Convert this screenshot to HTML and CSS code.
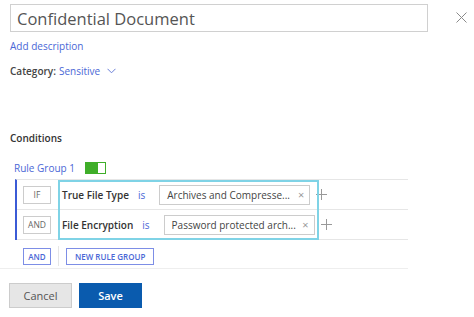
FILE: index.html
```html
<!DOCTYPE html>
<html lang="en">
<head>
  <meta charset="UTF-8" />
  <title>Rule Editor</title>
  <link rel="stylesheet" href="styles.css">
</head>
<body>
  <div class="page">

    <!-- Title -->
    <div class="title-row">
      <input class="title-input" type="text" value="Confidential Document" />
      <span class="close">
        <svg width="11" height="11" viewBox="0 0 11 11"><path d="M0.5 0.5L10.5 10.5M10.5 0.5L0.5 10.5" stroke="#8a8a8a" stroke-width="1"/></svg>
      </span>
    </div>
    <a class="link add-desc">Add description</a>
    <div class="category">
      <b>Category:</b> <a class="link">Sensitive</a>
      <svg class="chev" width="9" height="6" viewBox="0 0 9 6"><path d="M0.5 0.8L4.5 4.8L8.5 0.8" fill="none" stroke="#6a7fd8" stroke-width="1"/></svg>
    </div>

    <!-- Conditions -->
    <h3 class="section">Conditions</h3>
    <div class="group-head">
      <span class="link">Rule Group 1</span>
      <span class="toggle"><span class="knob"></span></span>
    </div>

    <div class="group">
      <div class="row">
        <span class="op">IF</span>
        <span class="field">True File Type</span>
        <span class="is">is</span>
        <span class="value">Archives and Compresse... <i class="x">&times;</i></span>
        <svg class="plus" width="11" height="11" viewBox="0 0 11 11"><path d="M5.5 0V11M0 5.5H11" stroke="#999" stroke-width="1"/></svg>
      </div>
      <div class="row">
        <span class="op">AND</span>
        <span class="field">File Encryption</span>
        <span class="is">is</span>
        <span class="value">Password protected arch... <i class="x">&times;</i></span>
        <svg class="plus" width="11" height="11" viewBox="0 0 11 11"><path d="M5.5 0V11M0 5.5H11" stroke="#999" stroke-width="1"/></svg>
      </div>
      <div class="highlight"></div>
    </div>

    <div class="group-actions">
      <button class="outline-btn and-btn">AND</button>
      <span class="divider"></span>
      <button class="outline-btn">NEW RULE GROUP</button>
    </div>

    <div class="footer">
      <button class="btn cancel">Cancel</button>
      <button class="btn save">Save</button>
    </div>
  </div>
</body>
</html>
```

FILE: styles.css
```css
* {
  box-sizing: border-box;
  margin: 0;
  padding: 0;
}

body {
  font-family: 'Open Sans', sans-serif;
  color: #333;
  background: #fff;
  width: 474px;
  height: 317px;
  overflow: hidden;
}

.page {
  padding: 4px 0 0 10px;
}

.link {
  color: #4a67d6;
  font-size: 10px;
  cursor: pointer;
}

.title-row {
  display: flex;
  align-items: center;
}

.title-input {
  width: 418px;
  height: 28px;
  border: 1px solid #d0d0d0;
  padding: 0 6px;
  font-family: 'Open Sans', sans-serif;
  font-size: 16.5px;
  color: #555;
  outline: none;
}

.close {
  display: flex;
  margin-left: 28px;
  margin-top: -1px;
}

.add-desc {
  display: block;
  margin-top: 6px;
  line-height: 16px;
}

.category {
  margin-top: 9px;
  font-size: 10px;
  line-height: 16px;
  display: flex;
  align-items: center;
}

.category b {
  font-weight: 600;
  color: #444;
  margin-right: 3px;
}

.chev {
  margin-left: 7px;
}

.section {
  margin-top: 51px;
  font-size: 10px;
  font-weight: 600;
  color: #333;
  line-height: 16px;
}

.group-head {
  margin-top: 14px;
  margin-left: 4px;
  display: flex;
  align-items: center;
  line-height: 16px;
}

.toggle {
  margin-left: 10px;
  width: 21px;
  height: 12px;
  border: 1px solid #3fae29;
  background: #fff;
  display: flex;
}

.knob {
  width: 12px;
  background: #3fae29;
}

.group {
  position: relative;
  margin-top: 3px;
  margin-left: 5px;
  width: 393px;
  border-left: 2px solid #3b5bd6;
  border-top: 1px solid #e6e6e6;
}

.row {
  display: flex;
  align-items: center;
  height: 30px;
  padding-left: 6px;
  border-bottom: 1px solid #e6e6e6;
  font-size: 10px;
}

.op {
  width: 28px;
  height: 18px;
  border: 1px solid #ccc;
  font-size: 8.5px;
  color: #666;
  display: flex;
  align-items: center;
  justify-content: center;
  margin-right: 11px;
}

.field {
  font-weight: 600;
  color: #333;
}

.is {
  color: #4a67d6;
  margin-left: 9px;
  margin-right: 14px;
}

.value {
  width: 151px;
  height: 20px;
  border: 1px solid #ccc;
  display: flex;
  align-items: center;
  padding-left: 7px;
  color: #444;
  white-space: nowrap;
}

.x {
  font-style: normal;
  color: #999;
  margin-left: auto;
  margin-right: 5px;
  font-size: 11px;
}

.plus {
  margin-left: 6px;
}

.highlight {
  position: absolute;
  left: 41px;
  top: 0;
  width: 261px;
  height: 60px;
  border: 2px solid #7fd3e6;
  pointer-events: none;
}

.group-actions {
  display: flex;
  align-items: center;
  margin-left: 13px;
  margin-top: 5px;
  width: 385px;
  height: 22px;
}

.outline-btn {
  height: 17px;
  padding: 0 8px;
  border: 1px solid #7d8ee6;
  background: #fff;
  color: #4a67d6;
  font-family: 'Open Sans', sans-serif;
  font-size: 8px;
  font-weight: 600;
}

.and-btn {
  width: 28px;
  padding: 0;
}

.divider {
  width: 1px;
  height: 20px;
  background: #e6e6e6;
  margin: 0 7px;
}

.footer {
  margin-left: -10px;
  width: 408px;
  border-top: 1px solid #eee;
  margin-top: 1px;
  padding: 14px 0 0 9px;
  display: flex;
  gap: 7px;
}

.btn {
  width: 63px;
  height: 25px;
  font-family: 'Open Sans', sans-serif;
  font-size: 11px;
  border: 1px solid #ccc;
}

.cancel {
  background: #e6e6e6;
  color: #555;
}

.save {
  background: #0a5bae;
  border-color: #0a5bae;
  color: #fff;
  font-weight: 600;
}
```
